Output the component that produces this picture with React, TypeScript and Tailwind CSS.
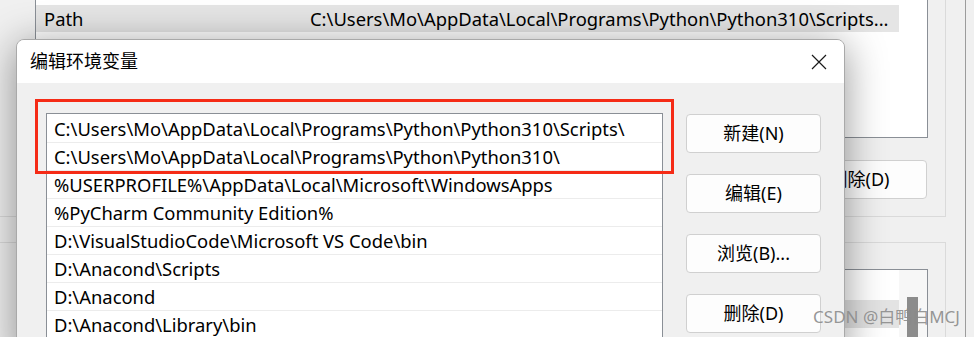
const PATHS = [
  "C:\\Users\\Mo\\AppData\\Local\\Programs\\Python\\Python310\\Scripts\\",
  "C:\\Users\\Mo\\AppData\\Local\\Programs\\Python\\Python310\\",
  "%USERPROFILE%\\AppData\\Local\\Microsoft\\WindowsApps",
  "%PyCharm Community Edition%",
  "D:\\VisualStudioCode\\Microsoft VS Code\\bin",
  "D:\\Anacond\\Scripts",
  "D:\\Anacond",
  "D:\\Anacond\\Library\\bin",
];

const BUTTONS = ["新建(N)", "编辑(E)", "浏览(B)...", "删除(D)"];

function WinButton({ label, className = "" }: { label: string; className?: string }) {
  return (
    <button
      className={`flex h-[39px] w-[135px] items-center justify-center rounded-[4px] border border-[#d0d0d0] bg-[#fdfdfd] text-[18px] text-black ${className}`}
    >
      {label}
    </button>
  );
}

export default function App() {
  return (
    <div className="relative h-[337px] w-[974px] overflow-hidden bg-[#f0f0f0] font-['Noto_Sans','Noto_Sans_CJK_SC',sans-serif] text-black">
      {/* background: system properties window */}
      <div className="flex h-full">
        <div className="flex w-[965px] flex-col">
          <div className="flex h-[224px] w-[946px] flex-col border-r border-b border-[#dadada] pl-[35px]">
            <div className="h-[138px] w-[893px] border-x border-b border-[#8a8f96] bg-white pt-[5px]">
              <div className="flex h-[27px] w-[863px] items-center bg-[#e5e5e5] text-[18.4px]">
                <span className="w-[274px] pl-[8px]">Path</span>
                <span>C:\Users\Mo\AppData\Local\Programs\Python\Python310\Scripts...</span>
              </div>
            </div>
            <div className="mt-[22px] flex w-[892px] justify-end">
              <WinButton label="删除(D)" className="w-[133px]" />
            </div>
          </div>
          <div className="mt-[25px] flex w-[946px] flex-1 flex-col border-t border-r border-[#dadada] pt-[26px] pl-[35px]">
            <div className="flex w-[893px] flex-1 border-x border-t border-[#8a8f96] bg-white">
              <div className="flex-1 pt-[30px]">
                <div className="h-[28px] bg-[#e3e3e3]" />
              </div>
              <div className="w-[28px] bg-[#f7f7f7] pt-[27px] pl-[8px]">
                <div className="h-[40px] w-[11px] bg-[#8c8c8c]" />
              </div>
            </div>
          </div>
        </div>
        <div className="w-px bg-[#9c9c9c]" />
        <div className="flex-1" />
      </div>

      {/* dialog */}
      <div className="absolute top-[39px] left-[16px] h-[320px] w-[829px] overflow-hidden rounded-t-[8px] border border-[#a9a9a9] bg-[#f0f0f0] shadow-[0_6px_40px_rgba(0,0,0,0.42)]">
        <div className="flex h-[43px] items-center justify-between bg-white pr-[17px] pl-[13px]">
          <span className="text-[18px]">编辑环境变量</span>
          <svg width="16" height="16" viewBox="0 0 16 16">
            <path d="M1 1L15 15M15 1L1 15" stroke="#1a1a1a" strokeWidth="1.2" />
          </svg>
        </div>
        <div className="flex gap-[23px] pt-[30px] pl-[29px]">
          <div className="w-[617px] border border-[#8a8f96] bg-white pt-px">
            {PATHS.map((p) => (
              <div
                key={p}
                className="flex h-[28px] items-center border-b border-[#ececec] pl-[7px] text-[18.4px] whitespace-nowrap"
              >
                {p}
              </div>
            ))}
          </div>
          <div className="flex flex-col gap-[21px] pt-px">
            {BUTTONS.map((b) => (
              <WinButton key={b} label={b} />
            ))}
          </div>
        </div>

        {/* highlight annotation */}
        <div className="absolute top-[59px] left-[18px] h-[75px] w-[639px] border-[3px] border-[#f52b16]" />
      </div>

      <div className="absolute right-[14px] bottom-[8px] text-[17px] text-[#8a8a8a]/90">
        CSDN @白鸭白MCJ
      </div>
    </div>
  );
}
